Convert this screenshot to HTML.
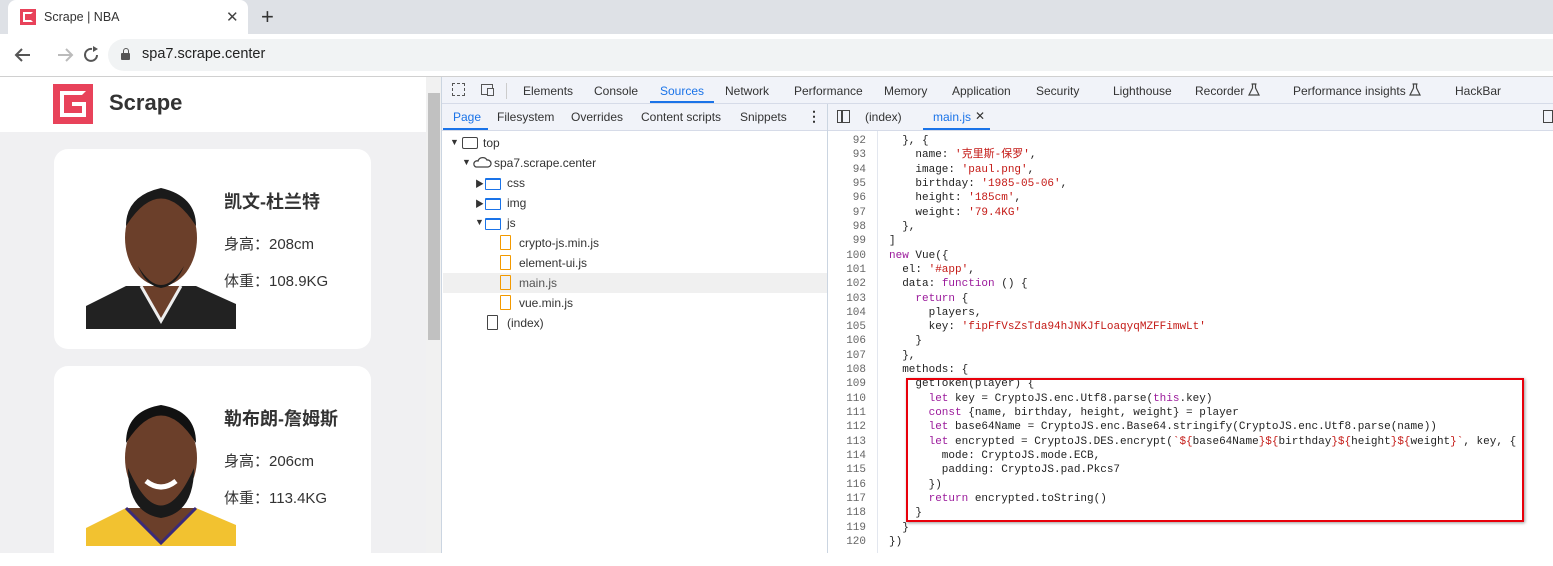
<!DOCTYPE html>
<html><head><meta charset="utf-8"><style>
*{margin:0;padding:0;box-sizing:border-box}
body{width:1553px;height:553px;overflow:hidden;position:relative;background:#fff;font-family:"Liberation Sans","Noto Sans CJK SC",sans-serif;color:#333}
.a{position:absolute}
.t{position:absolute;font-size:12px;color:#333;white-space:nowrap}
.code div{position:absolute;left:0;height:14.32px;line-height:14.32px;white-space:pre;font-family:"Liberation Mono","Noto Sans CJK SC",monospace;font-size:11px;color:#222}
.ln div{position:absolute;right:0;height:14.32px;line-height:14.32px;font-family:"Liberation Mono",monospace;font-size:11px;color:#666}
.k{color:#9b1a9b}.s{color:#c41a16}
</style></head><body>
<div class="a" style="left:0;top:0;width:1553px;height:34px;background:#dee1e6"></div>
<div class="a" style="left:8px;top:0;width:240px;height:34px;background:#fff;border-radius:8px 8px 0 0"></div>
<div class="a" style="left:20px;top:9px;width:16px;height:16px;background:#e8425a"></div>
<div class="a" style="left:23px;top:12px;width:10px;height:10px;border:2px solid #fff;border-right-color:transparent"></div>
<div class="t" style="left:44px;top:10px;font-size:12.5px">Scrape | NBA</div>
<div class="t" style="left:226px;top:8px;font-size:15px;color:#444">✕</div>
<div class="t" style="left:261px;top:4px;font-size:22px;color:#333">+</div>
<svg class="a" style="left:12px;top:45px" width="90" height="20"><path d="M18 10H4M10 4L4 10L10 16" stroke="#555" stroke-width="2" fill="none"/><path d="M46 10H60M54 4L60 10L54 16" stroke="#bbb" stroke-width="2" fill="none"/><path d="M80 4A6 6 0 1 0 85 10" stroke="#555" stroke-width="2" fill="none"/><path d="M81 1L86 4L81 7Z" fill="#555"/></svg>
<div class="a" style="left:108px;top:39px;width:1460px;height:32px;background:#f1f3f4;border-radius:16px"></div>
<div class="a" style="left:121px;top:53px;width:9px;height:7px;background:#555;border-radius:1px"></div>
<div class="a" style="left:122.5px;top:48px;width:6px;height:7px;border:1.5px solid #555;border-radius:3px 3px 0 0"></div>
<div class="t" style="left:142px;top:46px;font-size:14.5px;color:#222">spa7.scrape.center</div>
<div class="a" style="left:0;top:76px;width:1553px;height:1px;background:#d0d0d0"></div>
<div class="a" style="left:0;top:77px;width:426px;height:476px;background:#f0f0f2"></div>
<div class="a" style="left:0;top:77px;width:426px;height:55px;background:#fff"></div>
<div class="a" style="left:53px;top:84px;width:40px;height:40px;background:#e8425a"></div>
<div class="a" style="left:60px;top:91px;width:26px;height:26px;border:4px solid #fff;border-right-color:transparent"></div>
<div class="a" style="left:72px;top:102px;width:14px;height:4px;background:#fff"></div>
<div class="a" style="left:82px;top:102px;width:4px;height:15px;background:#fff"></div>
<div class="t" style="left:109px;top:90px;font-size:22px;font-weight:bold;color:#333">Scrape</div>
<div class="a" style="left:426px;top:77px;width:16px;height:476px;background:#f1f1f1"></div>
<div class="a" style="left:428px;top:93px;width:12px;height:247px;background:#c1c1c1"></div>
<div class="a" style="left:54px;top:149px;width:317px;height:200px;background:#fff;border-radius:14px"></div>
<div class="a" style="left:54px;top:366px;width:317px;height:200px;background:#fff;border-radius:14px"></div>
<svg class="a" style="left:86px;top:186px" width="150" height="143"><path d="M0 143V120L40 100H110L150 118V143Z" fill="#222"/><path d="M55 100L75 135L95 100" fill="#6b3f2a" stroke="#eee" stroke-width="3"/><ellipse cx="75" cy="52" rx="36" ry="48" fill="#6b3f2a"/><path d="M40 40Q75 -15 110 40Q110 10 75 2Q40 10 40 40Z" fill="#1a1a1a"/><path d="M52 80Q75 118 98 80Q90 100 75 102Q60 100 52 80Z" fill="#1a1a1a"/></svg>
<svg class="a" style="left:86px;top:403px" width="150" height="143"><path d="M0 143V125L40 105H110L150 122V143Z" fill="#f2c230"/><path d="M40 105L75 140L110 105" fill="#6b3f2a" stroke="#3a2a7a" stroke-width="3"/><ellipse cx="75" cy="55" rx="36" ry="48" fill="#6b3f2a"/><path d="M40 40Q75 -15 110 40Q110 8 75 2Q40 8 40 40Z" fill="#111"/><path d="M42 65Q75 140 108 65Q108 110 75 115Q42 110 42 65Z" fill="#1a1a1a"/><path d="M60 78Q75 90 90 78" stroke="#fff" stroke-width="5" fill="none"/></svg>
<div class="t" style="left:224px;top:188px;font-size:18px;font-weight:bold">凯文-杜兰特</div>
<div class="t" style="left:224px;top:233px;font-size:15px">身高：208cm</div>
<div class="t" style="left:224px;top:270px;font-size:15px">体重：108.9KG</div>
<div class="t" style="left:224px;top:405px;font-size:18px;font-weight:bold">勒布朗-詹姆斯</div>
<div class="t" style="left:224px;top:450px;font-size:15px">身高：206cm</div>
<div class="t" style="left:224px;top:487px;font-size:15px">体重：113.4KG</div>
<div class="a" style="left:441px;top:77px;width:1px;height:476px;background:#cbd5e1"></div>
<div class="a" style="left:442px;top:77px;width:1111px;height:27px;background:#f1f3f9;border-bottom:1px solid #d6dbe8"></div>
<div class="a" style="left:442px;top:104px;width:1111px;height:27px;background:#f1f3f9;border-bottom:1px solid #d6dbe8"></div>
<div class="a" style="left:452px;top:83px;width:13px;height:13px;border:1.5px dashed #555"></div>
<div class="a" style="left:481px;top:84px;width:12px;height:11px;border:1.5px solid #555"></div>
<div class="a" style="left:487px;top:88px;width:7px;height:8px;background:#f1f3f9;border:1.5px solid #555"></div>
<div class="a" style="left:506px;top:83px;width:1px;height:16px;background:#ccc"></div>
<div class="t" style="left:523px;top:84px">Elements</div>
<div class="t" style="left:594px;top:84px">Console</div>
<div class="t" style="left:660px;top:84px;color:#1a73e8">Sources</div>
<div class="a" style="left:650px;top:101px;width:64px;height:2px;background:#1a73e8"></div>
<div class="t" style="left:725px;top:84px">Network</div>
<div class="t" style="left:794px;top:84px">Performance</div>
<div class="t" style="left:884px;top:84px">Memory</div>
<div class="t" style="left:952px;top:84px">Application</div>
<div class="t" style="left:1036px;top:84px">Security</div>
<div class="t" style="left:1113px;top:84px">Lighthouse</div>
<div class="t" style="left:1195px;top:84px">Recorder</div>
<svg class="a" style="left:1248px;top:83px" width="12" height="13"><path d="M3.5 1H8.5M4.5 1V5L1 12H11L7.5 5V1" stroke="#444" stroke-width="1.2" fill="none"/></svg>
<div class="t" style="left:1293px;top:84px">Performance insights</div>
<svg class="a" style="left:1409px;top:83px" width="12" height="13"><path d="M3.5 1H8.5M4.5 1V5L1 12H11L7.5 5V1" stroke="#444" stroke-width="1.2" fill="none"/></svg>
<div class="t" style="left:1455px;top:84px">HackBar</div>
<div class="t" style="left:453px;top:110px;color:#1a73e8">Page</div>
<div class="a" style="left:443px;top:128px;width:45px;height:2px;background:#1a73e8"></div>
<div class="t" style="left:497px;top:110px">Filesystem</div>
<div class="t" style="left:571px;top:110px">Overrides</div>
<div class="t" style="left:641px;top:110px">Content scripts</div>
<div class="t" style="left:740px;top:110px">Snippets</div>
<div class="t" style="left:807px;top:108px;font-weight:bold;font-size:14px">⋮</div>
<div class="a" style="left:827px;top:104px;width:1px;height:449px;background:#cbd5e1"></div>
<div class="a" style="left:837px;top:110px;width:13px;height:13px;border:1.5px solid #444"></div>
<div class="a" style="left:841px;top:110px;width:1.5px;height:13px;background:#444"></div>
<div class="t" style="left:865px;top:110px">(index)</div>
<div class="t" style="left:933px;top:110px;color:#1a73e8">main.js</div>
<div class="t" style="left:975px;top:109px">✕</div>
<div class="a" style="left:923px;top:128px;width:67px;height:2px;background:#1a73e8"></div>
<div class="a" style="left:1543px;top:110px;width:10px;height:13px;border:1.5px solid #444"></div>
<div class="a" style="left:443px;top:273px;width:384px;height:20px;background:#f0f0f0"></div>
<div class="t" style="left:450px;top:137px;font-size:9px">▼</div>
<div class="a" style="left:462px;top:137px;width:16px;height:12px;border:1.5px solid #444;border-radius:2px"></div>
<div class="t" style="left:483px;top:136px">top</div>
<div class="t" style="left:462px;top:157px;font-size:9px">▼</div>
<svg class="a" style="left:472px;top:155px" width="20" height="14"><path d="M4 12H16A3.5 3.5 0 0 0 15 5A5 5 0 0 0 6 6A3 3 0 0 0 4 12Z" stroke="#444" stroke-width="1.3" fill="none"/></svg>
<div class="t" style="left:494px;top:156px">spa7.scrape.center</div>
<div class="t" style="left:475px;top:177px;font-size:9px">▶</div>
<div class="a" style="left:485px;top:178px;width:16px;height:12px;border:1.5px solid #1a73e8;border-top-width:2.5px;border-radius:1px"></div>
<div class="t" style="left:507px;top:176px">css</div>
<div class="t" style="left:475px;top:197px;font-size:9px">▶</div>
<div class="a" style="left:485px;top:198px;width:16px;height:12px;border:1.5px solid #1a73e8;border-top-width:2.5px;border-radius:1px"></div>
<div class="t" style="left:507px;top:196px">img</div>
<div class="t" style="left:475px;top:217px;font-size:9px">▼</div>
<div class="a" style="left:485px;top:218px;width:16px;height:12px;border:1.5px solid #1a73e8;border-top-width:2.5px;border-radius:1px"></div>
<div class="t" style="left:507px;top:216px">js</div>
<div class="a" style="left:500px;top:235px;width:11px;height:15px;border:1.5px solid #f29900;border-radius:1px"></div><div class="t" style="left:519px;top:236px">crypto-js.min.js</div>
<div class="a" style="left:500px;top:255px;width:11px;height:15px;border:1.5px solid #f29900;border-radius:1px"></div><div class="t" style="left:519px;top:256px">element-ui.js</div>
<div class="a" style="left:500px;top:275px;width:11px;height:15px;border:1.5px solid #f29900;border-radius:1px"></div><div class="t" style="left:519px;top:276px;color:#555">main.js</div>
<div class="a" style="left:500px;top:295px;width:11px;height:15px;border:1.5px solid #f29900;border-radius:1px"></div><div class="t" style="left:519px;top:296px">vue.min.js</div>
<div class="a" style="left:487px;top:315px;width:11px;height:15px;border:1.5px solid #444;border-radius:1px"></div><div class="t" style="left:507px;top:316px">(index)</div>
<div class="a" style="left:877px;top:131px;width:1px;height:422px;background:#e3e7ef"></div>
<div class="ln a" style="left:830px;top:134px;width:36px">
<div style="top:0px">92</div><div style="top:14.32px">93</div><div style="top:28.64px">94</div><div style="top:42.96px">95</div><div style="top:57.28px">96</div><div style="top:71.6px">97</div><div style="top:85.92px">98</div><div style="top:100.24px">99</div><div style="top:114.56px">100</div><div style="top:128.88px">101</div><div style="top:143.2px">102</div><div style="top:157.52px">103</div><div style="top:171.84px">104</div><div style="top:186.16px">105</div><div style="top:200.48px">106</div><div style="top:214.8px">107</div><div style="top:229.12px">108</div><div style="top:243.44px">109</div><div style="top:257.76px">110</div><div style="top:272.08px">111</div><div style="top:286.4px">112</div><div style="top:300.72px">113</div><div style="top:315.04px">114</div><div style="top:329.36px">115</div><div style="top:343.68px">116</div><div style="top:358px">117</div><div style="top:372.32px">118</div><div style="top:386.64px">119</div><div style="top:400.96px">120</div>
</div>
<div class="code a" style="left:889px;top:134px;width:660px">
<div style="top:0px">  }, {</div>
<div style="top:14.32px">    name: <span class="s">'克里斯-保罗'</span>,</div>
<div style="top:28.64px">    image: <span class="s">'paul.png'</span>,</div>
<div style="top:42.96px">    birthday: <span class="s">'1985-05-06'</span>,</div>
<div style="top:57.28px">    height: <span class="s">'185cm'</span>,</div>
<div style="top:71.6px">    weight: <span class="s">'79.4KG'</span></div>
<div style="top:85.92px">  },</div>
<div style="top:100.24px">]</div>
<div style="top:114.56px"><span class="k">new</span> Vue({</div>
<div style="top:128.88px">  el: <span class="s">'#app'</span>,</div>
<div style="top:143.2px">  data: <span class="k">function</span> () {</div>
<div style="top:157.52px">    <span class="k">return</span> {</div>
<div style="top:171.84px">      players,</div>
<div style="top:186.16px">      key: <span class="s">'fipFfVsZsTda94hJNKJfLoaqyqMZFFimwLt'</span></div>
<div style="top:200.48px">    }</div>
<div style="top:214.8px">  },</div>
<div style="top:229.12px">  methods: {</div>
<div style="top:243.44px">    getToken(player) {</div>
<div style="top:257.76px">      <span class="k">let</span> key = CryptoJS.enc.Utf8.parse(<span class="k">this</span>.key)</div>
<div style="top:272.08px">      <span class="k">const</span> {name, birthday, height, weight} = player</div>
<div style="top:286.4px">      <span class="k">let</span> base64Name = CryptoJS.enc.Base64.stringify(CryptoJS.enc.Utf8.parse(name))</div>
<div style="top:300.72px">      <span class="k">let</span> encrypted = CryptoJS.DES.encrypt(<span class="s">`${</span>base64Name<span class="s">}${</span>birthday<span class="s">}${</span>height<span class="s">}${</span>weight<span class="s">}`</span>, key, {</div>
<div style="top:315.04px">        mode: CryptoJS.mode.ECB,</div>
<div style="top:329.36px">        padding: CryptoJS.pad.Pkcs7</div>
<div style="top:343.68px">      })</div>
<div style="top:358px">      <span class="k">return</span> encrypted.toString()</div>
<div style="top:372.32px">    }</div>
<div style="top:386.64px">  }</div>
<div style="top:400.96px">})</div>
</div>
<div class="a" style="left:906px;top:378px;width:618px;height:144px;border:2px solid #e8000b;box-shadow:1px 1px 3px rgba(0,0,0,.4)"></div>
</body></html>
